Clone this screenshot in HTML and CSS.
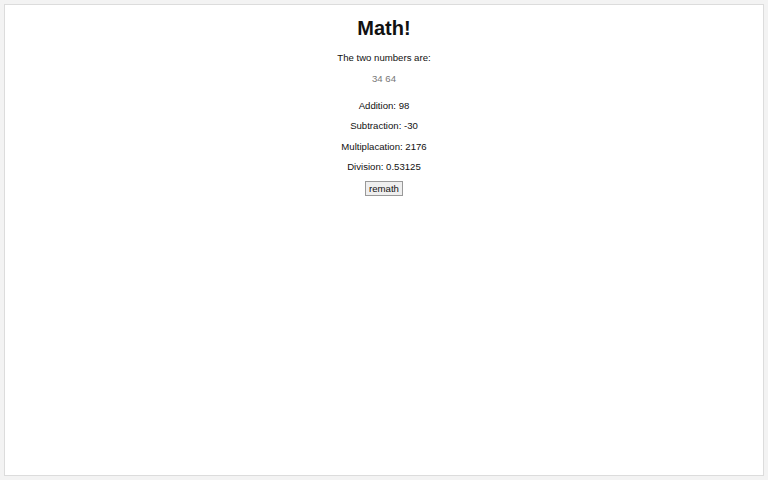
FILE: index.html
```html
<!DOCTYPE html>
<html>
<head>
<meta charset="utf-8">
<title>Math!</title>
<link rel="stylesheet" href="styles.css">
</head>
<body>
<main class="sheet">
  <h1 class="title">Math!</h1>
  <p class="line">The two numbers are:</p>
  <p class="numbers">34 64</p>
  <p class="line">Addition: 98</p>
  <p class="line">Subtraction: -30</p>
  <p class="line">Multiplacation: 2176</p>
  <p class="line last">Division: 0.53125</p>
  <button class="rematch" type="button">remath</button>
</main>
</body>
</html>
```

FILE: styles.css
```css
html, body {
  margin: 0;
  padding: 0;
  height: 100%;
}

body {
  background: #f3f3f3;
  padding: 4px;
  box-sizing: border-box;
  font-family: "Liberation Sans", Arial, sans-serif;
  color: #111;
}

.sheet {
  height: 100%;
  box-sizing: border-box;
  background: #fff;
  border: 1px solid #dcdcdc;
  display: flex;
  flex-direction: column;
  align-items: center;
  padding-top: 12px;
}

.title {
  font-size: 20px;
  font-weight: bold;
  margin: 0 0 12px;
  line-height: 23px;
}

.line {
  font-size: 9.6px;
  line-height: 11px;
  margin: 0 0 9.5px;
}

.line.last {
  margin-bottom: 8.5px;
}

.numbers {
  font-size: 9.6px;
  line-height: 11px;
  margin: 0 0 16px;
  color: #777;
}

.rematch {
  font-family: "Liberation Sans", Arial, sans-serif;
  font-size: 9.6px;
  line-height: 11px;
  padding: 1px 3px;
  background: #efefef;
  border: 1px solid #999;
  border-radius: 0;
  color: #111;
}
```
